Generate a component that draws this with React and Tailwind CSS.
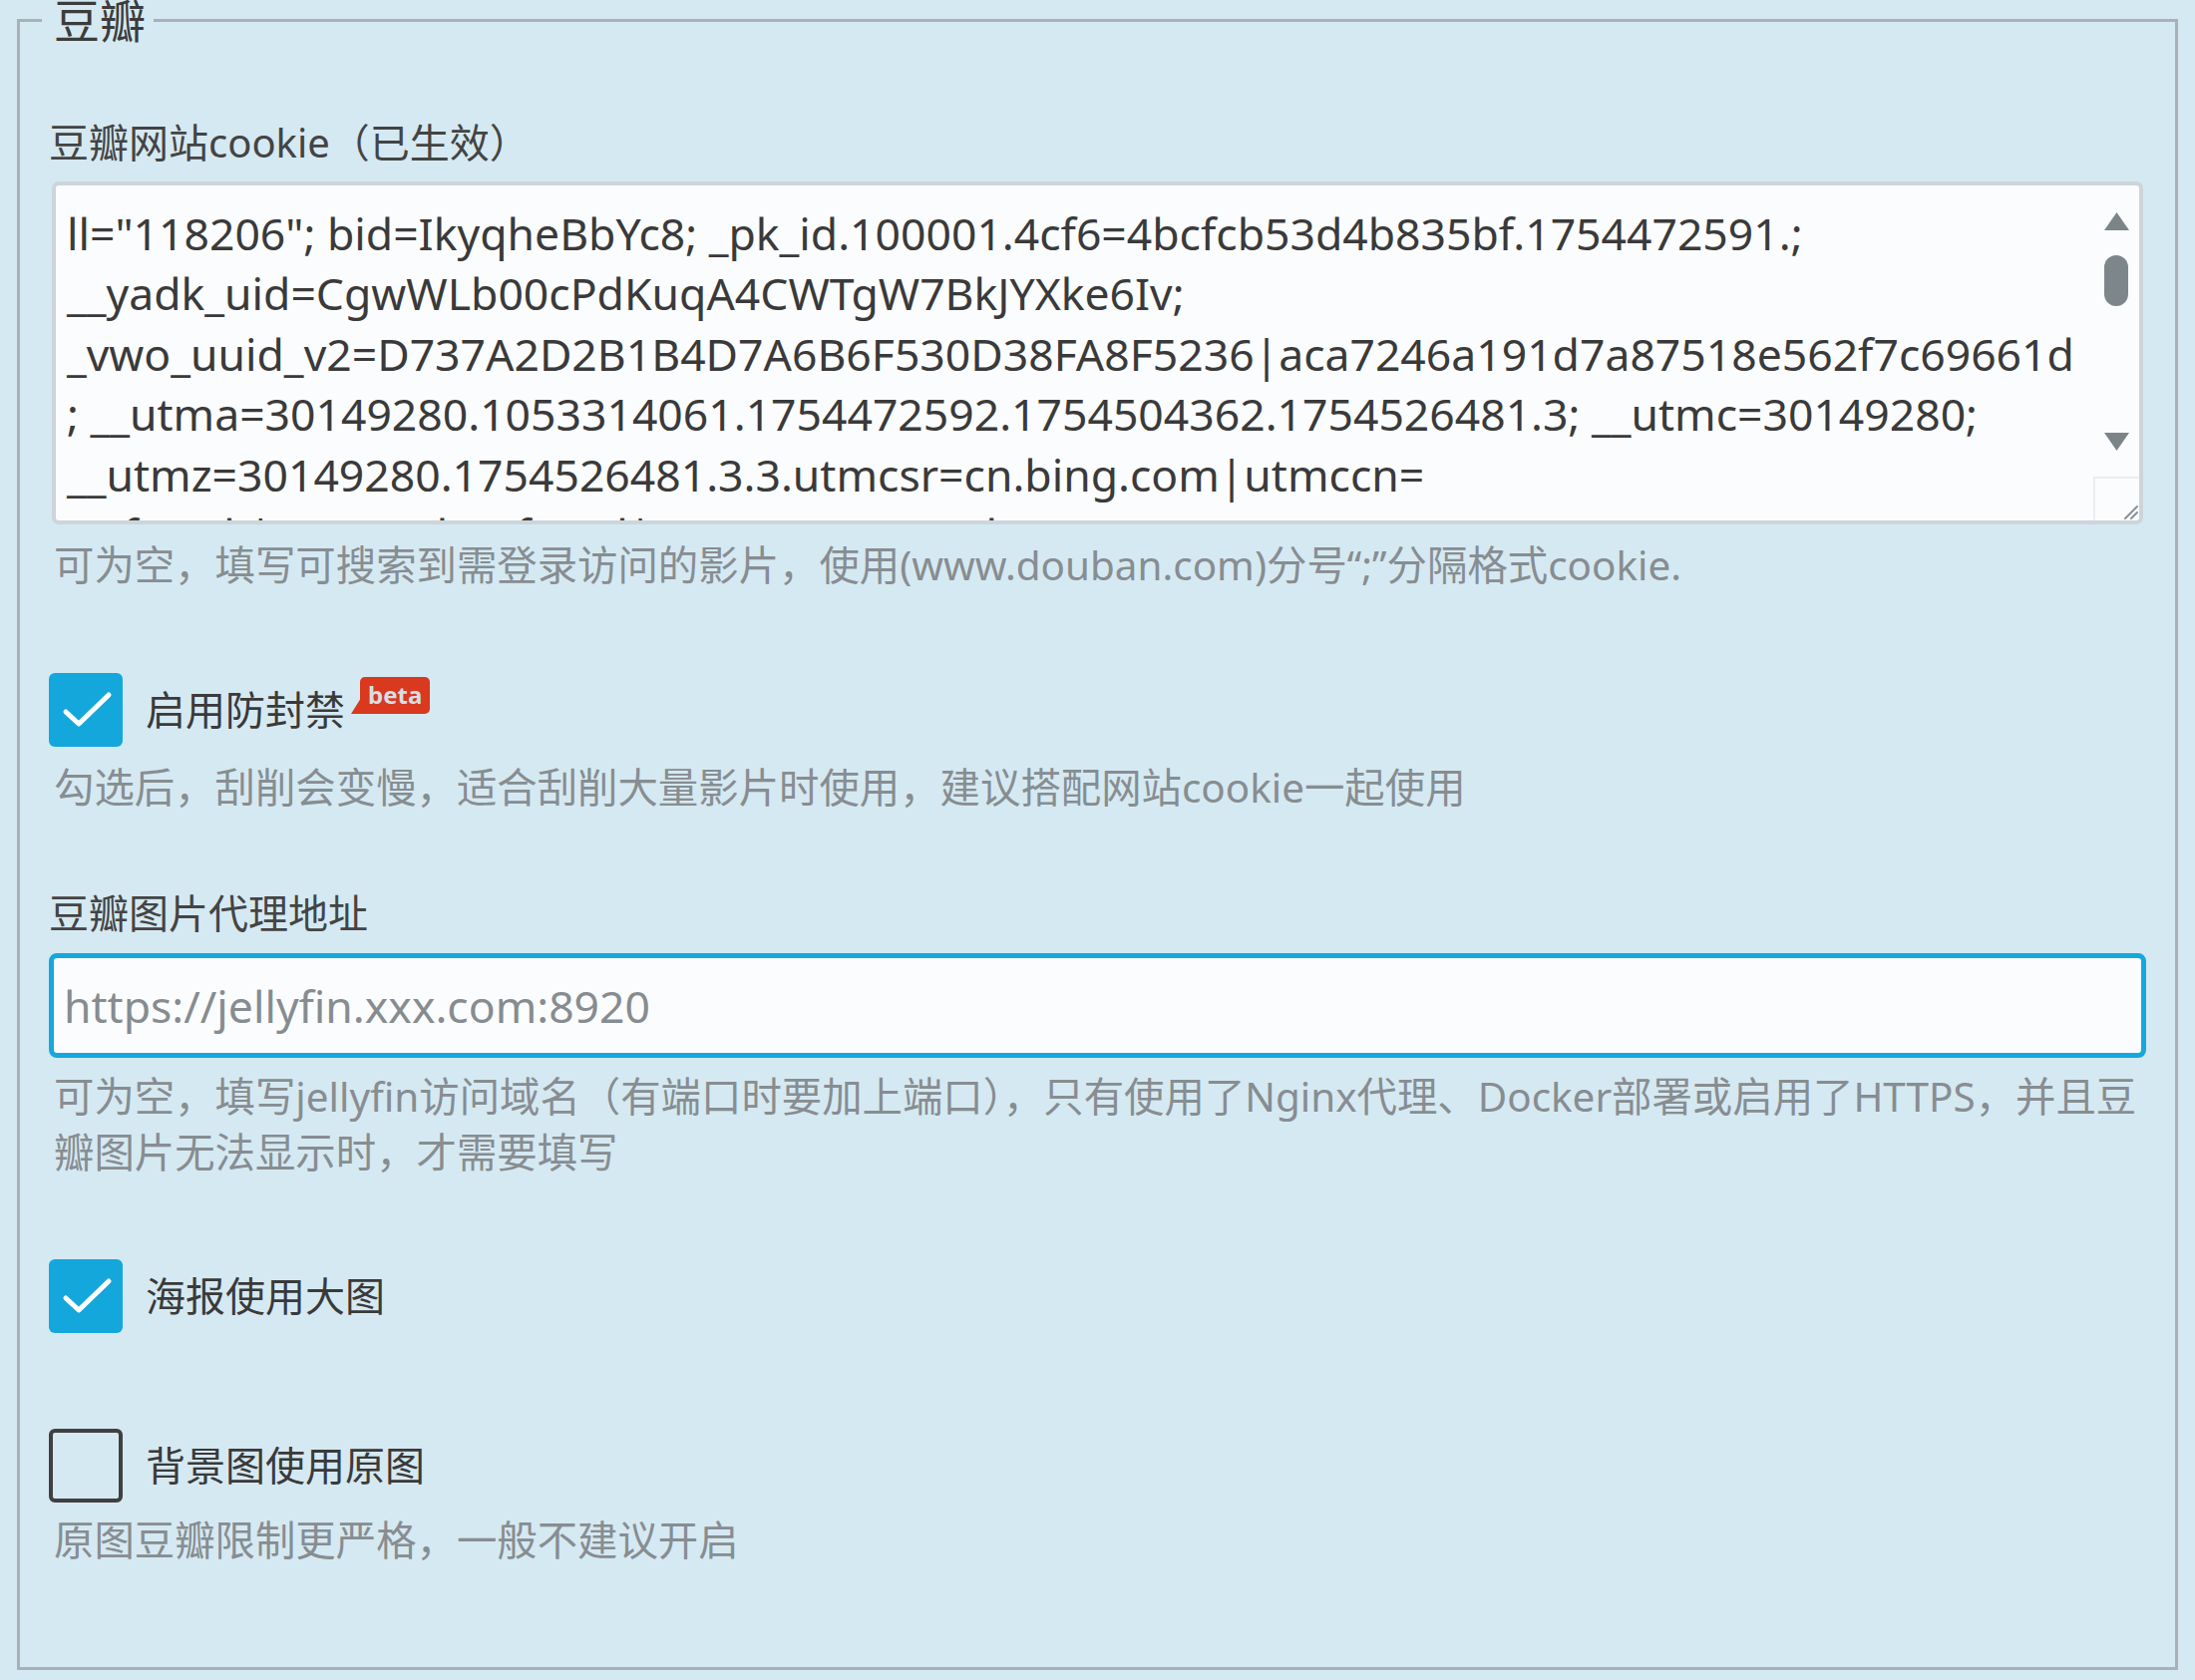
import React from "react";

const font = { fontFamily: '"Noto Sans", "Noto Sans CJK SC", sans-serif' };

const cookieLines = [
  'll="118206"; bid=IkyqheBbYc8; _pk_id.100001.4cf6=4bcfcb53d4b835bf.1754472591.;',
  "__yadk_uid=CgwWLb00cPdKuqA4CWTgW7BkJYXke6Iv;",
  "_vwo_uuid_v2=D737A2D2B1B4D7A6B6F530D38FA8F5236|aca7246a191d7a87518e562f7c69661d",
  "; __utma=30149280.1053314061.1754472592.1754504362.1754526481.3; __utmc=30149280;",
  "__utmz=30149280.1754526481.3.3.utmcsr=cn.bing.com|utmccn=",
  "(referral)|utmcmd=referral|utmcct=/; __utmb=30149280.1.10.1754526481;",
];

const Check = ({ checked }) =>
  checked ? (
    <div className="w-[74px] h-[74px] shrink-0 rounded-[6px] bg-[#14a7dc] flex items-center justify-center">
      <svg width="74" height="74" viewBox="0 0 74 74">
        <path
          d="M17 39 L30 51 L60 22"
          fill="none"
          stroke="#ffffff"
          strokeWidth="5"
          strokeLinecap="round"
          strokeLinejoin="round"
        />
      </svg>
    </div>
  ) : (
    <div className="w-[74px] h-[74px] shrink-0 rounded-[6px] border-[4px] border-[#404040]" />
  );

const Help = ({ children, className = "" }) => (
  <p className={`pl-[5px] text-[40.4px] leading-[56px] text-[#878d91] ${className}`}>{children}</p>
);

export default function App() {
  return (
    <div className="min-h-screen bg-[#d5e9f2] pb-[13px]" style={font}>
      <fieldset className="mx-[17px] mt-[-3px] border-[3px] border-[#a9b1b6] px-[29px] pt-[70px] pb-[99px]">
        <legend className="-ml-[7px] pl-[12px] pr-[8px] text-[46px] leading-[46px] text-[#3c3c3c]">
          豆瓣
        </legend>

        {/* cookie */}
        <label className="block text-[40px] leading-[60px] text-[#444]">豆瓣网站cookie（已生效）</label>
        <div className="mt-[9px] mx-[3px] h-[344px] rounded-[7px] border-[4px] border-[#cdd5da] bg-[#fbfcfd] flex overflow-hidden">
          <div className="flex-1 overflow-hidden pl-[11px] pt-[18px] text-[44.5px] leading-[60.4px] text-[#3a3a3a] whitespace-pre">
            {cookieLines.map((l, i) => (
              <div key={i}>{l}</div>
            ))}
          </div>
          <div className="w-[46px] shrink-0 flex flex-col items-center">
            <svg className="mt-[26px]" width="27" height="20" viewBox="0 0 27 20">
              <path d="M13.5 1 L26 19 L1 19 Z" fill="#7b8589" />
            </svg>
            <div className="mt-[24px] w-[24px] h-[51px] rounded-full bg-[#7d878b]" />
            <svg className="mt-[126px]" width="27" height="20" viewBox="0 0 27 20">
              <path d="M1 1 L26 1 L13.5 19 Z" fill="#7b8589" />
            </svg>
            <div className="mt-auto w-full h-[44px] border-t-[2px] border-l-[2px] border-[#e9edef] flex items-end justify-end">
              <svg width="20" height="20" viewBox="0 0 20 20">
                <path d="M18 6 L6 18 M18 12 L12 18" stroke="#8a9397" strokeWidth="2" strokeLinecap="round" />
              </svg>
            </div>
          </div>
        </div>
        <Help className="mt-[13px]">
          可为空，填写可搜索到需登录访问的影片，使用(www.douban.com)分号“;”分隔格式cookie.
        </Help>

        {/* anti-ban */}
        <div className="mt-[80px] flex items-center gap-[23px]">
          <Check checked />
          <div className="flex items-start">
            <span className="text-[40px] leading-[60px] text-[#3a3a3a]">启用防封禁</span>
            <span className="relative ml-[15px] mt-[-3px] h-[37px] px-[8px] rounded-[5px] rounded-bl-none bg-[#d8391f] text-[24px] leading-[36px] font-bold text-[#d6dfe3]">
              beta
              <svg className="absolute left-[-9px] bottom-0" width="10" height="16" viewBox="0 0 10 16">
                <path d="M10 0 L10 16 L0 16 Z" fill="#d8391f" />
              </svg>
            </span>
          </div>
        </div>
        <Help className="mt-[13px]">勾选后，刮削会变慢，适合刮削大量影片时使用，建议搭配网站cookie一起使用</Help>

        {/* proxy */}
        <label className="mt-[68px] block text-[40px] leading-[60px] text-[#444]">豆瓣图片代理地址</label>
        <input
          className="mt-[10px] block w-full h-[105px] rounded-[8px] border-[5px] border-[#15a8dc] bg-[#fbfcfe] pl-[10px] text-[44.5px] text-[#3a3a3a] outline-none placeholder:text-[#868c90]"
          style={font}
          placeholder="https://jellyfin.xxx.com:8920"
        />
        <Help className="mt-[11px]">
          可为空，填写jellyfin访问域名（有端口时要加上端口），只有使用了Nginx代理、Docker部署或启用了HTTPS，并且豆瓣图片无法显示时，才需要填写
        </Help>

        {/* poster */}
        <div className="mt-[79px] flex items-center gap-[23px]">
          <Check checked />
          <span className="text-[40px] leading-[60px] text-[#3a3a3a]">海报使用大图</span>
        </div>

        {/* backdrop */}
        <div className="mt-[96px] flex items-center gap-[23px]">
          <Check checked={false} />
          <span className="text-[40px] leading-[60px] text-[#3a3a3a]">背景图使用原图</span>
        </div>
        <Help className="mt-[10px]">原图豆瓣限制更严格，一般不建议开启</Help>
      </fieldset>
    </div>
  );
}
